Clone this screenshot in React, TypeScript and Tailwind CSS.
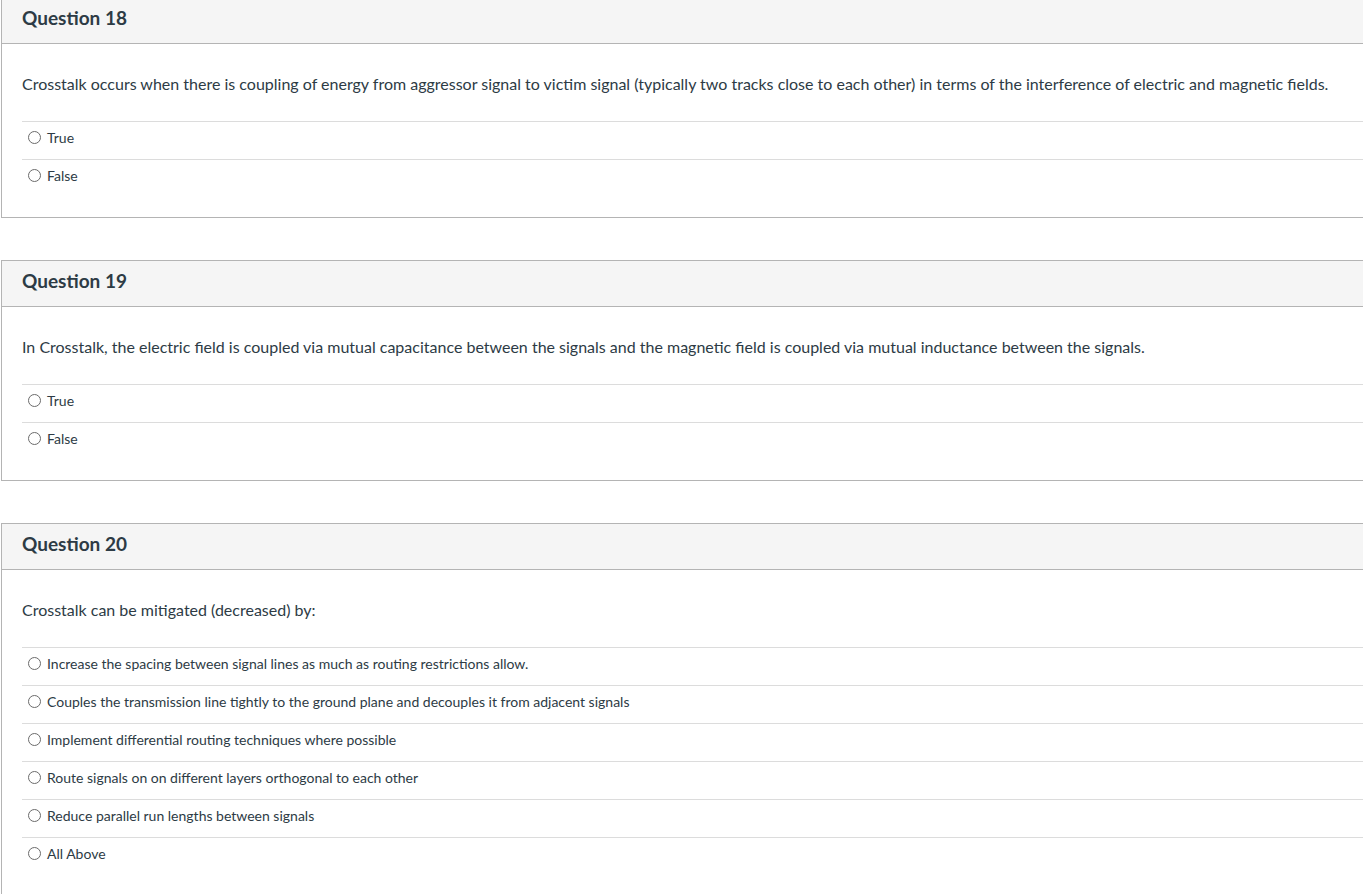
import React from 'react';

interface Question {
  number: number;
  text: string;
  answers: string[];
}

const questions: Question[] = [
  {
    number: 18,
    text: 'Crosstalk occurs when there is coupling of energy from aggressor signal to victim signal (typically two tracks close to each other) in terms of the interference of electric and magnetic fields.',
    answers: ['True', 'False'],
  },
  {
    number: 19,
    text: 'In Crosstalk, the electric field is coupled via mutual capacitance between the signals and the magnetic field is coupled via mutual inductance between the signals.',
    answers: ['True', 'False'],
  },
  {
    number: 20,
    text: 'Crosstalk can be mitigated (decreased) by:',
    answers: [
      'Increase the spacing between signal lines as much as routing restrictions allow.',
      'Couples the transmission line tightly to the ground plane and decouples it from adjacent signals',
      'Implement differential routing techniques where possible',
      'Route signals on on different layers orthogonal to each other',
      'Reduce parallel run lengths between signals',
      'All Above',
    ],
  },
];

const QuestionCard: React.FC<{ q: Question }> = ({ q }) => (
  <div className="w-[calc(100%+20px)] border border-[#b4b4b4] bg-white mb-[42px] first:mt-[-3px]">
    <div className="h-[46px] bg-[#f5f5f5] border-b border-[#b4b4b4] flex items-center pl-[20px] pb-[6px]">
      <h2 className="text-[19px] font-bold text-[#2d3b45] leading-none">Question {q.number}</h2>
    </div>
    <div className="pl-[20px] pt-[28px] pb-[20px]">
      <p className="text-[16px] leading-[24px] text-[#2d3b45] mb-[25px]">{q.text}</p>
      {q.answers.map((a) => (
        <div key={a} className="h-[38px] border-t border-[#dcdcdc] flex items-center pl-[6px] pb-[7px]">
          <span className="w-[13px] h-[13px] rounded-full border border-[#6b6b6b] bg-white shrink-0" />
          <span className="ml-[6px] text-[14px] text-[#2d3b45]">{a}</span>
        </div>
      ))}
    </div>
  </div>
);

export default function App() {
  return (
    <div className="min-h-screen bg-white overflow-hidden pl-px font-['Lato','Liberation_Sans',sans-serif]">
      {questions.map((q) => (
        <QuestionCard key={q.number} q={q} />
      ))}
    </div>
  );
}
